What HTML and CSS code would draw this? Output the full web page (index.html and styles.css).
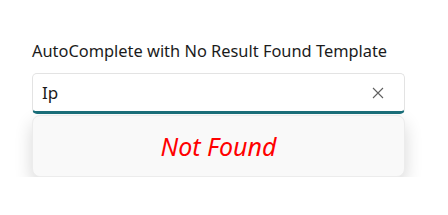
FILE: index.html
```html
<!DOCTYPE html>
<html lang="en">
<head>
  <meta charset="UTF-8" />
  <title>AutoComplete</title>
  <link rel="stylesheet" href="styles.css">
</head>
<body>
  <div class="sample">
    <label class="caption" for="country">AutoComplete with No Result Found Template</label>

    <div class="autocomplete">
      <input type="text" id="country" class="ac-input" value="Ip">
      <span class="clear-icon">
        <svg width="12" height="12" viewBox="0 0 12 12">
          <path d="M1 1 L11 11 M11 1 L1 11" stroke="#606060" stroke-width="1.1" fill="none"/>
        </svg>
      </span>
    </div>

    <!-- Popup -->
    <div class="popup">
      <span class="no-record">Not Found</span>
    </div>
  </div>
</body>
</html>
```

FILE: styles.css
```css
body {
  margin: 0;
  background: #ffffff;
  font-family: "Noto Sans", "Open Sans", sans-serif;
}

.sample {
  width: 373px;
  padding: 40px 0 0 32px;
}

.caption {
  display: block;
  font-size: 16.4px;
  color: #1b1b1b;
  line-height: 22px;
  margin-bottom: 11px;
}

.autocomplete {
  position: relative;
  height: 37px;
  border: 1px solid #e3e3e3;
  border-bottom: 3px solid #1a6e79;
  border-radius: 5px;
  background: #ffffff;
  display: flex;
  align-items: center;
}

.ac-input {
  flex: 1;
  border: none;
  outline: none;
  background: transparent;
  font-family: inherit;
  font-size: 17px;
  color: #1b1b1b;
  padding: 0 0 0 9px;
  height: 100%;
}

.clear-icon {
  display: flex;
  width: 12px;
  height: 12px;
  margin-right: 20px;
}

.popup {
  margin-top: 1px;
  height: 60px;
  border: 1px solid #ececec;
  border-radius: 8px;
  background: #f9f9f9;
  box-shadow: 0 8px 18px rgba(0, 0, 0, 0.16);
  display: flex;
  align-items: center;
  justify-content: center;
}

.no-record {
  color: #ff0000;
  font-style: italic;
  font-size: 25px;
}
```
